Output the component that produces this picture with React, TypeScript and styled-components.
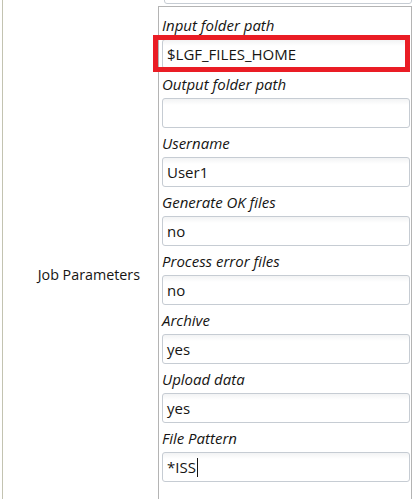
import React from "react"
import styled, { createGlobalStyle } from "styled-components"

const GlobalStyle = createGlobalStyle`
    html, body {
        margin: 0;
        padding: 0;
        background: #ffffff;
        font-family: "Open Sans", "Liberation Sans", sans-serif;
        color: #161513;
    }
`

const Page = styled('div')`
    margin-left: 2px;
    border-left: 1px solid #c3c3b1;
    height: 499px;
    overflow: hidden;
`

const PrevRow = styled('div')`
    display: flex;
    justify-content: flex-end;
    align-items: flex-end;
    height: 4px;
    padding-right: 3px;
    overflow: hidden;
`

const Row = styled('div')`
    display: flex;
    margin-top: 2px;
`

const RowLabel = styled('div')`
    width: 155px;
    box-sizing: border-box;
    padding: 259px 18px 0 0;
    text-align: right;
    font-size: 14.3px;
    line-height: 20px;
`

const Panel = styled('div')`
    width: 254px;
    box-sizing: border-box;
    border: 1px solid #b4b4b4;
    border-bottom: none;
    padding: 3px 2px 60px 3px;
    display: flex;
    flex-direction: column;
`

const Field = styled('div')`
    position: relative;
    display: flex;
    flex-direction: column;
`

const FieldLabel = styled('div')`
    font-style: italic;
    font-size: 15px;
    line-height: 20px;
    padding: 5px 0 4px 0;
    color: #161513;
`

const InputBox = styled('div')`
    width: 248px;
    height: 30px;
    box-sizing: border-box;
    border: 1px solid #c6ccd3;
    border-radius: 3px;
    background: linear-gradient(#f2f3f4 0px, #ffffff 6px);
    padding-left: 4px;
    font-size: 15px;
    line-height: 28px;
    color: #161513;
    display: flex;
    align-items: center;
    flex-shrink: 0;
`

const Caret = styled('span')`
    display: inline-block;
    width: 1px;
    height: 19px;
    background: #161513;
    margin-left: 1px;
`

/* annotation drawn over the first input */
const Highlight = styled('div')`
    position: absolute;
    left: -9px;
    top: 25px;
    width: 257px;
    height: 37px;
    box-sizing: border-box;
    border: 5px solid #ea1d25;
    pointer-events: none;
`

const fields = [
    { label: "Input folder path", value: "$LGF_FILES_HOME", highlight: true },
    { label: "Output folder path", value: "" },
    { label: "Username", value: "User1" },
    { label: "Generate OK files", value: "no" },
    { label: "Process error files", value: "no" },
    { label: "Archive", value: "yes" },
    { label: "Upload data", value: "yes" },
    { label: "File Pattern", value: "*ISS", caret: true },
]

export default function App() {
    return (
        <>
            <GlobalStyle />
            <Page>
                <PrevRow>
                    <InputBox />
                </PrevRow>
                <Row>
                    <RowLabel>Job Parameters</RowLabel>
                    <Panel>
                        {fields.map(f => (
                            <Field key={f.label}>
                                <FieldLabel>{f.label}</FieldLabel>
                                <InputBox>
                                    {f.value}
                                    {f.caret && <Caret />}
                                </InputBox>
                                {f.highlight && <Highlight />}
                            </Field>
                        ))}
                    </Panel>
                </Row>
            </Page>
        </>
    )
}
